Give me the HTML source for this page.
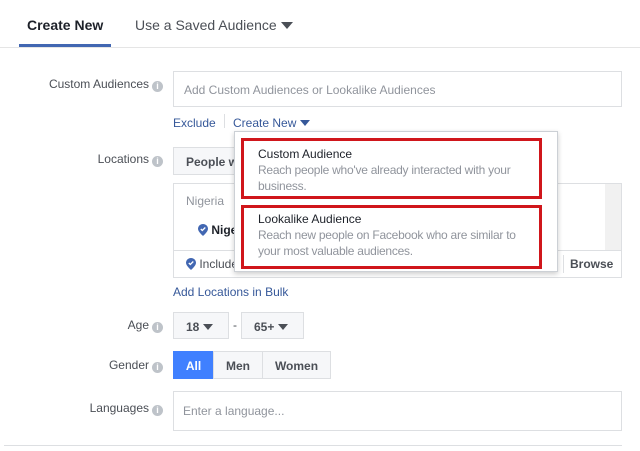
<!DOCTYPE html>
<html><head><meta charset="utf-8"><style>
*{box-sizing:border-box;margin:0;padding:0}
body{width:640px;height:451px;background:#fff;font-family:"Liberation Sans",Arial,sans-serif;font-size:12px;color:#4b4f56;position:relative;overflow:hidden}
.a{position:absolute}
.lbl{position:absolute;right:477px;color:#4b4f56;font-size:12px;white-space:nowrap}
.i{display:inline-block;width:11px;height:11px;border-radius:50%;background:#bec3c9;color:#fff;font-size:9px;line-height:11px;text-align:center;font-weight:bold;margin-left:3px;vertical-align:-1px}
.box{position:absolute;border:1px solid #dddfe2;background:#fff}
.btn{position:absolute;border:1px solid #dddfe2;background:#f6f7f9;font-weight:bold;color:#4b4f56;font-size:12px;white-space:nowrap;overflow:hidden}
.tri{display:inline-block;width:0;height:0;border-left:5px solid transparent;border-right:5px solid transparent;border-top:6px solid #4b4f56;vertical-align:1px}
.link{color:#365899}
.pin{display:inline-block;width:10px;height:12px;vertical-align:-2px}
.d{color:#90949c;letter-spacing:-0.25px}
</style></head><body>
<div class="a" style="left:27px;top:17px;font-size:14px;font-weight:bold;color:#1d2129">Create New</div>
<div class="a" style="left:135px;top:17px;font-size:14px;color:#4b4f56">Use a Saved Audience <span class="tri" style="border-top-color:#4b4f56;border-left-width:6px;border-right-width:6px;border-top-width:7px"></span></div>
<div class="a" style="left:19px;top:44px;width:92px;height:3px;background:#4267b2"></div>
<div class="a" style="left:0;top:47px;width:640px;height:1px;background:#e5e5e5"></div>

<div class="lbl" style="top:77px">Custom Audiences<span class="i">i</span></div>
<div class="box" style="left:173px;top:71px;width:449px;height:36px;padding:11px 10px;color:#90949c">Add Custom Audiences or Lookalike Audiences</div>
<div class="a link" style="left:173px;top:116px">Exclude</div>
<div class="a" style="left:224px;top:114px;width:1px;height:14px;background:#dddfe2"></div>
<div class="a link" style="left:233px;top:116px">Create New <span class="tri" style="border-top-color:#365899"></span></div>

<div class="lbl" style="top:152px">Locations<span class="i">i</span></div>
<div class="btn" style="left:173px;top:147px;width:120px;height:28px;padding:7px 12px">People who live in</div>
<div class="box" style="left:173px;top:183px;width:449px;height:95px"></div>
<div class="a" style="left:605px;top:184px;width:16px;height:66px;background:#f1f1f1"></div>
<div class="a" style="left:174px;top:250px;width:447px;height:1px;background:#dddfe2"></div>
<div class="a" style="left:186px;top:194px;color:#90949c">Nigeria</div>
<div class="a" style="left:198px;top:223px;font-weight:bold;color:#1d2129"><svg class="pin" viewBox="0 0 10 12"><path d="M5 0C2.2 0 0 2.2 0 4.8 0 8 5 12 5 12s5-4 5-7.2C10 2.2 7.8 0 5 0z" fill="#4267b2"/><path d="M2.8 5l1.5 1.5 3-3" stroke="#fff" stroke-width="1.3" fill="none"/></svg> Nigeria</div>
<div class="a" style="left:186px;top:257px;color:#4b4f56"><svg class="pin" viewBox="0 0 10 12"><path d="M5 0C2.2 0 0 2.2 0 4.8 0 8 5 12 5 12s5-4 5-7.2C10 2.2 7.8 0 5 0z" fill="#4267b2"/><path d="M2.8 5l1.5 1.5 3-3" stroke="#fff" stroke-width="1.3" fill="none"/></svg> Include</div>
<div class="a" style="left:563px;top:255px;width:1px;height:18px;background:#dddfe2"></div>
<div class="a" style="left:570px;top:257px;font-weight:bold;color:#4b4f56">Browse</div>
<div class="a link" style="left:173px;top:285px">Add Locations in Bulk</div>

<div class="lbl" style="top:318px">Age<span class="i">i</span></div>
<div class="btn" style="left:173px;top:312px;width:56px;height:27px;padding:7px 12px">18 <span class="tri"></span></div>
<div class="a" style="left:233px;top:318px">-</div>
<div class="btn" style="left:241px;top:312px;width:63px;height:27px;padding:7px 12px">65+ <span class="tri"></span></div>

<div class="lbl" style="top:358px">Gender<span class="i">i</span></div>
<div class="btn" style="left:173px;top:351px;width:41px;height:28px;padding:7px 0;text-align:center;background:#4080ff;border-color:#4080ff;color:#fff">All</div>
<div class="btn" style="left:213px;top:351px;width:50px;height:28px;padding:7px 0;text-align:center">Men</div>
<div class="btn" style="left:262px;top:351px;width:69px;height:28px;padding:7px 0;text-align:center">Women</div>

<div class="lbl" style="top:401px">Languages<span class="i">i</span></div>
<div class="box" style="left:173px;top:391px;width:449px;height:40px;padding:12px 9px;color:#90949c">Enter a language...</div>
<div class="a" style="left:4px;top:445px;width:618px;height:1px;background:#dddfe2"></div>

<div class="a" style="left:234px;top:131px;width:324px;height:141px;background:#fff;border:1px solid #ccd0d5;box-shadow:0 2px 5px rgba(0,0,0,.2)"></div>
<div class="a" style="left:241px;top:138px;width:301px;height:61px;border:3px solid #d0161b;padding:5px 14px;line-height:16px">
<div style="color:#1d2129">Custom Audience</div><div class="d">Reach people who've already interacted with your business.</div></div>
<div class="a" style="left:241px;top:205px;width:301px;height:64px;border:3px solid #d0161b;padding:3px 12px 3px 14px;line-height:16px">
<div style="color:#1d2129">Lookalike Audience</div><div class="d">Reach new people on Facebook who are similar to your most valuable audiences.</div></div>
</body></html>
